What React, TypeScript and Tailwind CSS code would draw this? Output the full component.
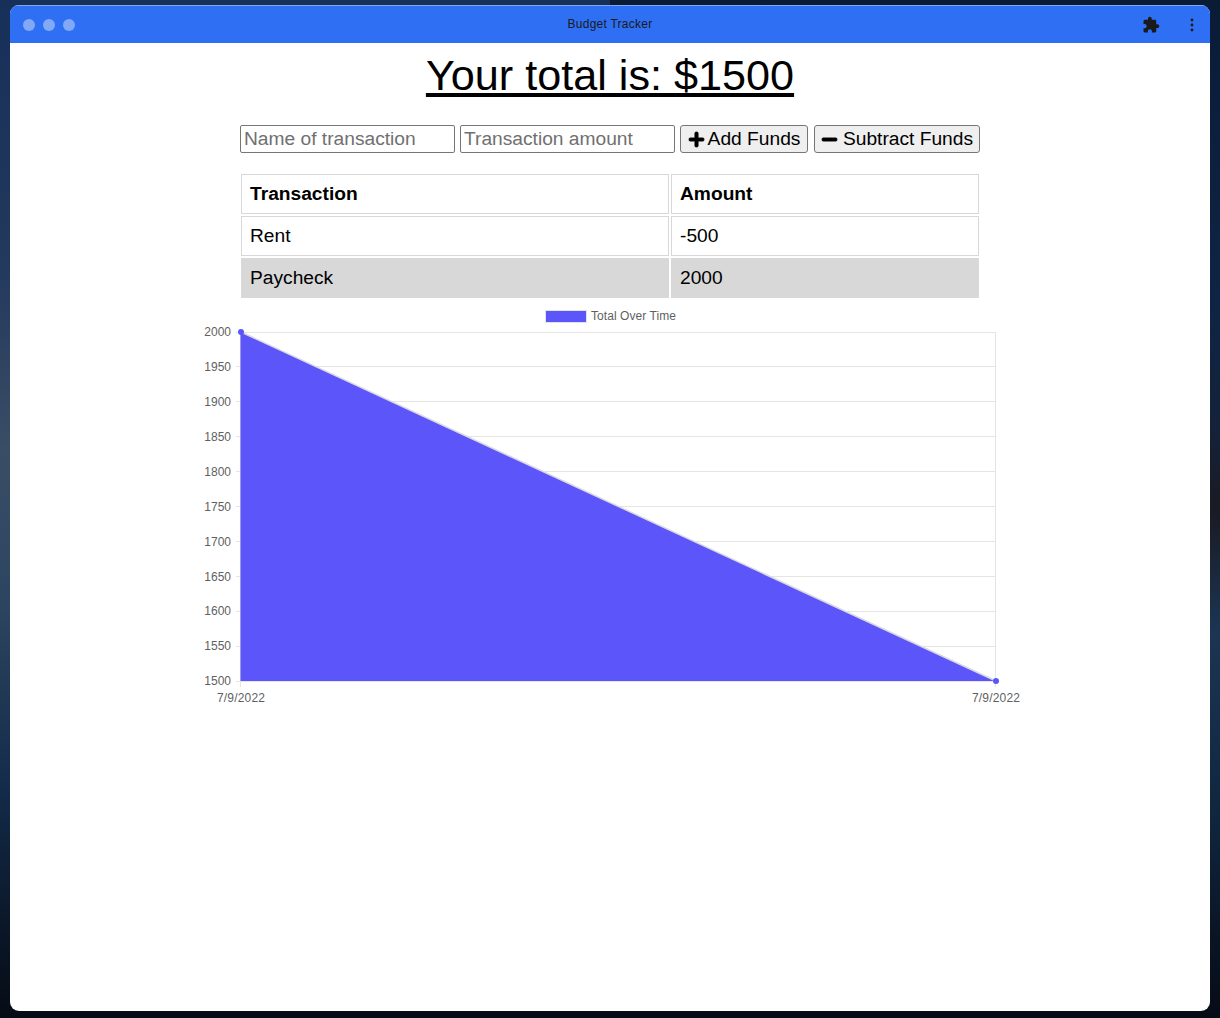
import React from "react";
import { FaPlus, FaMinus } from "react-icons/fa";
import { MdExtension } from "react-icons/md";

const ticks = [2000, 1950, 1900, 1850, 1800, 1750, 1700, 1650, 1600, 1550, 1500];
const X0 = 51;
const X1 = 806;
const Y0 = 27;
const STEP = 34.9;
const Y1 = Y0 + STEP * 10;
const FONT = '"Liberation Sans", Arial, sans-serif';

function Chart() {
  return (
    <svg width="840" height="410" viewBox="0 0 840 410" className="block" fontFamily={FONT}>
      <rect x="355.5" y="5.5" width="41" height="12" fill="#5c55f9" stroke="#e2e2ea" strokeWidth="1" />
      <text x="401" y="15" fontSize="12" fill="#5f5f5f" textLength="85">Total Over Time</text>
      {ticks.map((t, i) => {
        const y = Math.floor(Y0 + STEP * i) + 0.5;
        const baseline = 30.5 + 35 * i - (i >= 8 ? 1 : 0);
        return (
          <g key={t}>
            <line x1={X0 - 5} x2={X1} y1={y} y2={y} stroke="#e5e5e5" />
            <text x={X0 - 10} y={baseline} fontSize="12" fill="#5f5f5f" textAnchor="end">{t}</text>
          </g>
        );
      })}
      <line x1={X0 - 0.5} x2={X0 - 0.5} y1={Y0} y2={Y1 + 6} stroke="#e5e5e5" />
      <line x1={X1 - 0.5} x2={X1 - 0.5} y1={Y0} y2={Y1 + 6} stroke="#e5e5e5" />
      <polygon points={`${X0 - 0.5},${Y0} ${X1},${Y1} ${X0 - 0.5},${Y1}`} fill="#5c55f9" />
      <line x1={X0} y1={Y0} x2={X1} y2={Y1} stroke="#d9d7e2" strokeWidth="1.5" />
      <line x1={X0 - 0.5} y1={Y0} x2={X0 - 0.5} y2={Y1} stroke="#9d99e8" strokeWidth="1" />
      <circle cx={X0} cy={Y0} r="3" fill="#5c55f9" />
      <circle cx={X1} cy={Y1} r="3" fill="#5c55f9" />
      <text x={X0} y={Y1 + 21} fontSize="12" fill="#5f5f5f" textAnchor="middle" textLength="48">7/9/2022</text>
      <text x={X1} y={Y1 + 21} fontSize="12" fill="#5f5f5f" textAnchor="middle" textLength="48">7/9/2022</text>
    </svg>
  );
}

const cell = "border border-[#d8d8d8] px-2 h-[40px] text-left";

export default function App() {
  return (
    <div className="h-[1018px] w-[1220px] overflow-hidden pt-[5px] px-[10px] bg-no-repeat bg-[length:50%_100%] bg-[position:0_0,100%_0] bg-[linear-gradient(180deg,#17305a_0%,#22385c_25%,#3a4d66_44%,#2c4460_60%,#132a48_78%,#0a1626_92%,#060c16_100%),linear-gradient(180deg,#0a1b36_0%,#0f2444_30%,#14223a_42%,#1a1a22_50%,#1b3552_62%,#10263f_80%,#0a1524_92%,#060c16_100%)]">
      <div className="h-[1006px] w-[1200px] rounded-[9px] overflow-hidden bg-white flex flex-col" style={{ fontFamily: FONT }}>
        <div className="h-[38px] shrink-0 bg-[#2e6ff3] border-t border-[#7fa6f5] flex items-center pl-[13px] pr-[13px] relative">
          <div className="flex gap-[8px]">
            <span className="w-3 h-3 rounded-full bg-[#82a9f8]" />
            <span className="w-3 h-3 rounded-full bg-[#82a9f8]" />
            <span className="w-3 h-3 rounded-full bg-[#82a9f8]" />
          </div>
          <div className="flex-1" />
          <div className="absolute inset-x-0 top-[10px] text-center text-[12px] leading-[16px] text-[#1a1a1a] tracking-[0.25px]">Budget Tracker</div>
          <div className="flex items-center gap-[30px] text-[#1a1a1a]">
            <MdExtension size={18} />
            <svg width="4" height="14" viewBox="0 0 4 14" className="mr-[3px]">
              <circle cx="2" cy="2" r="1.4" fill="#1a1a1a" />
              <circle cx="2" cy="7" r="1.4" fill="#1a1a1a" />
              <circle cx="2" cy="12" r="1.4" fill="#1a1a1a" />
            </svg>
          </div>
        </div>

        <div className="flex flex-col items-center text-black">
          <h1 className="text-[43.2px] leading-[49px] underline mt-[8px] font-normal">Your total is: $1500</h1>

          <div className="flex mt-[25px] h-[28px] w-[740px]">
            <input
              placeholder="Name of transaction"
              className="w-[215px] h-[28px] border border-[#767676] rounded-[2px] px-[3px] text-[19.2px] placeholder:text-[#707070] outline-none"
            />
            <input
              placeholder="Transaction amount"
              className="w-[215px] h-[28px] ml-[5px] border border-[#767676] rounded-[2px] px-[3px] text-[19.2px] placeholder:text-[#707070] outline-none"
            />
            <button className="w-[128px] h-[28px] ml-[5px] border border-[#767676] rounded-[3px] bg-[#efefef] text-[19.2px] flex items-center justify-center gap-[3px]">
              <FaPlus size={17} stroke="currentColor" strokeWidth={24} />
              <span>Add Funds</span>
            </button>
            <button className="w-[166px] h-[28px] ml-[6px] border border-[#767676] rounded-[3px] bg-[#efefef] text-[19.2px] flex items-center justify-center gap-[5px]">
              <FaMinus size={17} stroke="currentColor" strokeWidth={24} />
              <span>Subtract Funds</span>
            </button>
          </div>

          <table className="mt-[19px] w-[742px] border-separate border-spacing-[2px] text-[19.2px] table-fixed">
            <thead>
              <tr>
                <th className={`${cell} w-[428px] font-bold`}>Transaction</th>
                <th className={`${cell} font-bold`}>Amount</th>
              </tr>
            </thead>
            <tbody>
              <tr>
                <td className={cell}>Rent</td>
                <td className={cell}>-500</td>
              </tr>
              <tr>
                <td className="bg-[#d8d8d8] pl-[9px] pr-2 h-[40px]">Paycheck</td>
                <td className="bg-[#d8d8d8] pl-[9px] pr-2 h-[40px]">2000</td>
              </tr>
            </tbody>
          </table>

          <div className="mt-[5px] w-[840px]">
            <Chart />
          </div>
        </div>
      </div>
    </div>
  );
}
